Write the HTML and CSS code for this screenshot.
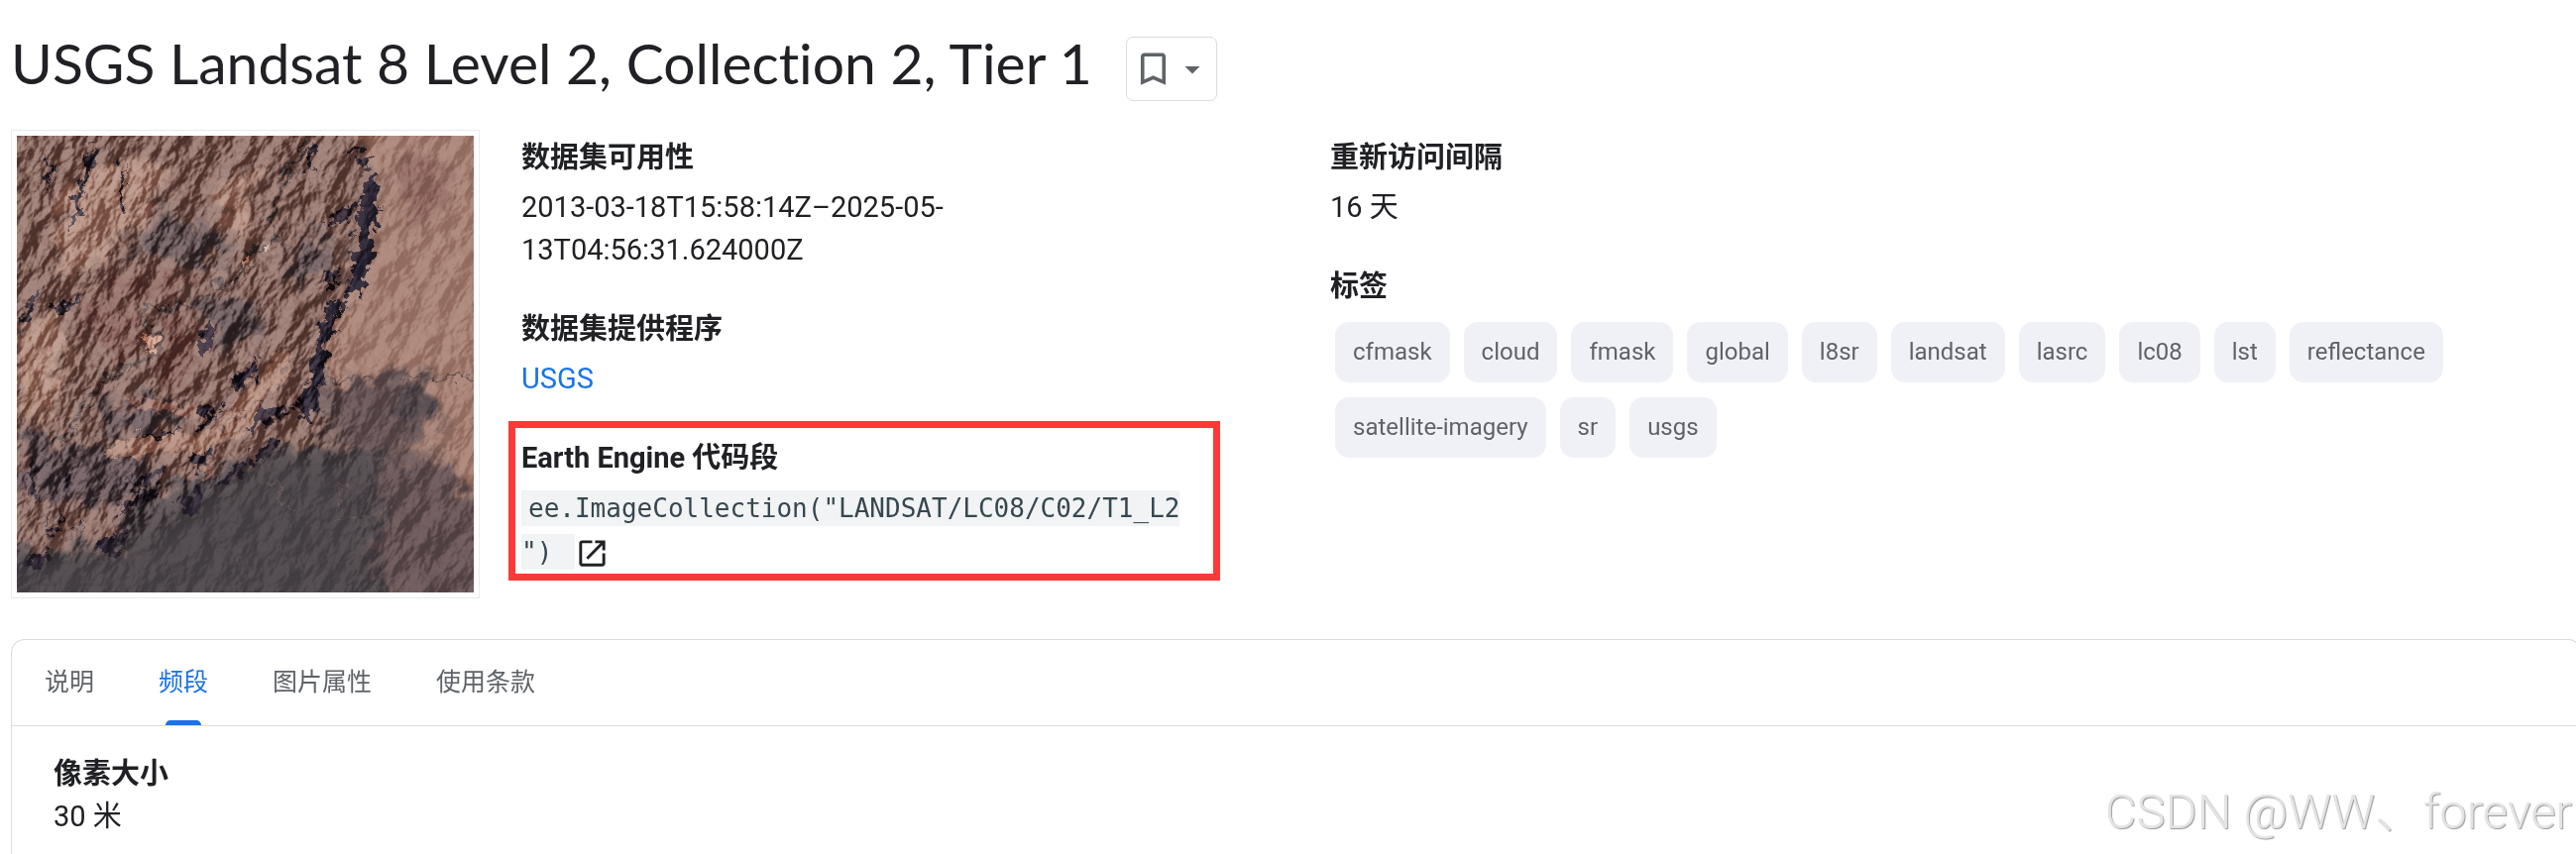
FILE: index.html
```html
<!DOCTYPE html>
<html lang="zh-CN">
<head>
  <meta charset="UTF-8" />
  <meta name="viewport" content="width=device-width, initial-scale=1.0"/>
  <title>USGS Landsat 8 Level 2, Collection 2, Tier 1</title>
  <link rel="stylesheet" href="styles.css">
</head>
<body>
  <header class="title-row">
    <h1>USGS Landsat 8 Level 2, Collection 2, Tier 1</h1>
    <button class="save-button" type="button" aria-label="收藏">
      <svg class="icon-bookmark" viewBox="0 0 24 24"><path d="M17 3H7c-1.100 0-2 .9-2 2v16l7-3 7 3V5c0-1.100-.9-2-2-2zm0 15l-5-2.180L7 18V5h10v13z"/></svg>
      <svg class="icon-arrow" viewBox="0 0 24 24"><path d="M7 10l5 5 5-5z"/></svg>
    </button>
  </header>

  <main>
    <section class="summary">
      <div class="thumb">
        <svg viewBox="51 51 1383 1383" role="img" aria-label="Landsat 8">
          <defs>
            <filter id="rough" x="0" y="0" width="1" height="1">
              <feTurbulence type="fractalNoise" baseFrequency="0.03" numOctaves="4" seed="4" result="n"/>
              <feDisplacementMap in="SourceGraphic" in2="n" scale="70" xChannelSelector="R" yChannelSelector="G"/>
              <feGaussianBlur stdDeviation="2"/>
            </filter>
            <filter id="soft" x="-0.2" y="-0.2" width="1.4" height="1.4">
              <feTurbulence type="fractalNoise" baseFrequency="0.015" numOctaves="5" seed="8" result="n"/>
              <feGaussianBlur in="SourceGraphic" stdDeviation="14"/>
              <feDisplacementMap in2="n" scale="150" xChannelSelector="R" yChannelSelector="G"/>
            </filter>
            <filter id="blur" x="-0.5" y="-0.5" width="2" height="2">
              <feGaussianBlur stdDeviation="40"/>
            </filter>
            <filter id="relief" x="0" y="0" width="1" height="1" color-interpolation-filters="sRGB">
              <feTurbulence type="fractalNoise" baseFrequency="0.013 0.008" numOctaves="6" seed="23"/>
              <feColorMatrix values="0 0 0 0 0  0 0 0 0 0  0 0 0 0 0  1 0 0 0 0"/>
              <feDiffuseLighting surfaceScale="55" diffuseConstant="1" lighting-color="#c4b8b4">
                <feDistantLight azimuth="175" elevation="42"/>
              </feDiffuseLighting>
            </filter>
            <clipPath id="frame"><path d="M51 51h1383v1383H51z"/></clipPath>
            <mask id="terrain" maskUnits="userSpaceOnUse" x="51" y="51" width="1383" height="1383">
              <rect x="51" y="51" width="1383" height="1383" fill="#fff"/>
              <g filter="url(#blur)">
                <path fill="#666" d="M1130 0h400v1500h-500V950l-30-200z"/>
                <path fill="#3a3a3a" d="M0 1340l380-60 260-160 180-120 260 40 40 460H0z"/>
              </g>
            </mask>
          </defs>
          <rect x="51" y="51" width="1383" height="1383" fill="#8b6f68"/>
          <!-- tones of the ground -->
          <g filter="url(#soft)">
            <path fill="#a88478" d="M1060 0H1600V1050L1200 980 940 780 1010 560 1100 420 1130 200z"/>
            <path fill="#957067" d="M1220 90l120 20 10 180-130 40z"/>
            <path fill="#50484e" d="M-100 1310L350 1290 400 1150 620 1090 820 990 1150 1000 1300 1100 1200 1600H-100z"/>
            <path fill="#685759" d="M1150 1010l450 30v600h-450zM960 800l330-30 60 150-180 90-200-60z"/>
            <path fill="#a98377" d="M1370 850h250v330l-260-60z"/>
            <path fill="#4c4549" d="M1190 850l90-40 30 50-60 50z"/>
            <path fill="#625558" d="M410 330l130-60 120 110 30 60-290-20zM600 560l170-20 30 120-150 40zM880 340l120 20 30 110-170 30z"/>
            <path fill="#83605c" d="M230 600l160-60 40 130-60 50zM320 470l300 10-110 70-260-30zM520 570l80 60-10 200-120-40z"/>
            <path fill="#ad8b7e" d="M180 200l220-90 120 60-220 260-120 40zM60 640l140-60-20 330-130-20zM680 180l80-20 10 180-100 10z"/>
            <path fill="#605358" d="M290 860l300 10-90 70-190 20zM70 960l380 60 20 80-140 70-260-30z"/>
          </g>
          <g filter="url(#rough)">
            <!-- river -->
            <path fill="none" stroke="#5d5253" stroke-width="12" d="M930 60L860 190 820 300 835 380 740 410 720 490 650 500 620 560 540 570 440 570 430 610 490 660 480 710 320 780 250 880 210 960 80 990"/>
            <path fill="#d0a795" d="M720 430l40-20-10 35zM800 400l30-25-10 40zM430 660l45-5 5 40-35 15z"/>
            <!-- bright ridges -->
            <path fill="#aa8678" d="M310 1010l100-50 230-10 150-90 10 30-60 60-120 55-300 20zM650 930l110-120 90-100 20 10-10 80-110 80z"/>
            <path fill="#a07a70" d="M620 1060l35-50-20 80zM370 840l180 20 90 40-60 10-180-50z"/>
            <!-- cliff shadows -->
            <path fill="#2c2836" d="M1100 190l40-30 12 70-20 100-8 110-35 100-38-20 20-90 5-100 20-60zM985 560l60-20-15 60-40 80-10 90-20 110-25 30-30-20 30-100 20-110z"/>
            <path fill="#302b37" d="M880 860l20-20 35 30-25 30zM980 470l35-20 20 40-50 20zM1010 290l60-40 20 10-50 50-55 10zM930 90l25 20-5 60-20-20zM750 940l60-70 70 10 5 8-60 12-60 60zM760 1020l60-50 20 10-60 70zM650 1100l90-60 20 10-110 70z"/>
            <path fill="#302b37" d="M350 1180l70-60 70-5-10 30-60 20-60 35zM540 1170l60-60 15 20-20 60-40 10zM75 1350l60-40 35-5-60 60zM280 1290l90-40 10 20-40 50zM430 960l110-20-5 12-100 18zM590 930l45-50 20-5-40 60zM600 670l50-60 15 30-50 80zM700 800l80-80-10 60-60 50zM610 860l60 10-10 30-60-10z"/>
            <path fill="#3b3440" d="M280 70l25 10-50 120-20 90-30 60 20-100zM370 130l10 20-5 130-15-20zM150 90l10 60-5 90-12-70zM1050 80l60 10-10 12-45-8zM1060 115l60 10-10 12-45-8zM95 540l20-10-30 70-30 20zM160 570l80-40-20 30-60 30z"/>
            <path fill="#3b3440" d="M90 1010l20 60-5 70-20 20zM130 1170l12 60-8 10zM180 1170l12 50-8 10zM235 1200l12 60-8 10zM140 1250l50-10-30 30zM210 1060l15 20-30 50zM380 1100l60-20 60-30-10 40-90 20zM580 1010l60-10-30 60-25 10z"/>
            <path fill="none" stroke="#655658" stroke-width="6" d="M1000 800l200-20 300 10M1240 1080l-100 120-140 20M1060 1030l-40 160M1240 1060l-50 160M820 1090l60 110"/>
          </g>
          <g class="relief" clip-path="url(#frame)" mask="url(#terrain)">
            <rect x="-400" y="-400" width="2300" height="2300" transform="rotate(32 742 742)" filter="url(#relief)"/>
          </g>
        </svg>
      </div>

      <div class="details">
        <dl>
          <dt>数据集可用性</dt>
          <dd>2013-03-18T15:58:14Z–2025-05-13T04:56:31.624000Z</dd>
          <dt>数据集提供程序</dt>
          <dd><a href="#usgs">USGS</a></dd>
          <div class="snippet">
            <dt>Earth Engine 代码段</dt>
            <dd><code>ee.ImageCollection("LANDSAT/LC08/C02/T1_L2")&nbsp;</code><a class="open-link" href="#open" aria-label="打开"><svg viewBox="0 0 24 24"><path d="M19 19H5V5h7V3H5c-1.110 0-2 .9-2 2v14c0 1.100.89 2 2 2h14c1.100 0 2-.9 2-2v-7h-2v7zM14 3v2h3.590l-9.830 9.830 1.410 1.410L19 6.410V10h2V3h-7z"/></svg></a></dd>
          </div>
        </dl>
        <dl>
          <dt>重新访问间隔</dt>
          <dd>16 天</dd>
          <dt>标签</dt>
          <dd class="tags">
            <a href="#cfmask">cfmask</a>
            <a href="#cloud">cloud</a>
            <a href="#fmask">fmask</a>
            <a href="#global">global</a>
            <a href="#l8sr">l8sr</a>
            <a href="#landsat">landsat</a>
            <a href="#lasrc">lasrc</a>
            <a href="#lc08">lc08</a>
            <a href="#lst">lst</a>
            <a href="#reflectance">reflectance</a>
            <a href="#satellite-imagery">satellite-imagery</a>
            <a href="#sr">sr</a>
            <a href="#usgs-tag">usgs</a>
          </dd>
        </dl>
      </div>
    </section>

    <section class="panel">
      <nav class="tabs">
        <a href="#description">说明</a>
        <a class="active" href="#bands">频段</a>
        <a href="#properties">图片属性</a>
        <a href="#terms">使用条款</a>
      </nav>
      <div class="panel-body">
        <h2>像素大小</h2>
        <p>30 米</p>
      </div>
    </section>
  </main>

  <div class="watermark">CSDN @WW、forever</div>
</body>
</html>
```

FILE: styles.css
```css
* {
  margin: 0;
  padding: 0;
  box-sizing: border-box;
}
body {
  display: flex;
  flex-direction: column;
  min-height: 100vh;
  padding-left: 11px;
  font-family: Roboto, "Noto Sans CJK SC", sans-serif;
  font-size: 29px;
  line-height: 43px;
  color: #202124;
  background: #fff;
  overflow-x: hidden;
}
a {
  color: #1a73e8;
  text-decoration: none;
}
main {
  display: flex;
  flex: 1;
  flex-direction: column;
}
.title-row {
  display: flex;
  align-items: flex-end;
  gap: 34px;
  height: 102px;
}
h1 {
  font-family: Lato, sans-serif;
  font-size: 57px;
  font-weight: 400;
  font-variant-ligatures: none;
  line-height: 78px;
}
.save-button {
  display: flex;
  align-items: center;
  width: 92px;
  height: 65px;
  padding-left: 5px;
  border: 1px solid #dadce0;
  border-radius: 7px;
  background: #fff;
}
.save-button svg {
  flex: none;
  fill: #5f6368;
}
.icon-bookmark {
  width: 43px;
  height: 43px;
}
.icon-arrow {
  width: 36px;
  height: 36px;
}
.summary {
  display: flex;
  align-items: flex-start;
  gap: 42px;
  margin-top: 29px;
}
.thumb {
  flex: none;
  width: 473px;
  padding: 5px;
  border: 1px solid #e8eaed;
}
.thumb svg {
  display: block;
  width: 100%;
}
.relief {
  mix-blend-mode: soft-light;
}
.details {
  display: grid;
  flex: 1;
  grid-template-columns: 33fr 62fr;
  gap: 147px;
  padding-top: 6px;
}
dt {
  padding-top: 1px;
  margin-bottom: 7px;
  font-weight: 700;
}
dd {
  margin-bottom: 36px;
}
.snippet {
  margin: -15px -36px 0 -13px;
  padding: 8px 29px 0 6px;
  border: 7px solid #ff3838;
}
.snippet dd {
  margin-bottom: 0;
}
code {
  padding: 3px 7px;
  font-family: "DejaVu Sans Mono", monospace;
  font-size: 26px;
  color: #37474f;
  background: #f1f3f4;
  line-break: anywhere;
}
.open-link svg {
  width: 35px;
  height: 35px;
  fill: #202124;
  vertical-align: middle;
}
.tags {
  display: flex;
  flex-wrap: wrap;
  gap: 15px 14px;
  padding: 7px 0 0 5px;
}
.tags a {
  padding: 9px 18px;
  border-radius: 14px;
  font-size: 24px;
  color: #5f6368;
  background: #f0f1f6;
}
.panel {
  flex: 1;
  margin: 41px -6px 0 0;
  border: 1px solid #dadce0;
  border-bottom: 0;
  border-radius: 14px 14px 0 0;
}
.tabs {
  display: flex;
  gap: 65px;
  padding: 0 33px;
  border-bottom: 1px solid #dadce0;
}
.tabs a {
  position: relative;
  font-size: 25px;
  line-height: 86px;
  color: #5f6368;
}
.tabs .active {
  color: #1a73e8;
}
.tabs .active::after {
  content: "";
  position: absolute;
  left: 7px;
  right: 7px;
  bottom: 0;
  height: 5px;
  border-radius: 5px 5px 0 0;
  background: #1a73e8;
}
.panel-body {
  padding: 27px 42px 12px;
}
h2 {
  font-size: 29px;
  line-height: 43px;
}
.watermark {
  position: fixed;
  right: 4px;
  bottom: 14px;
  font-family: Roboto, "Noto Sans CJK SC", sans-serif;
  font-size: 49px;
  font-weight: 300;
  line-height: 56px;
  color: #e4e4e4;
  text-shadow: 1px 1px 1px #999;
}
```
